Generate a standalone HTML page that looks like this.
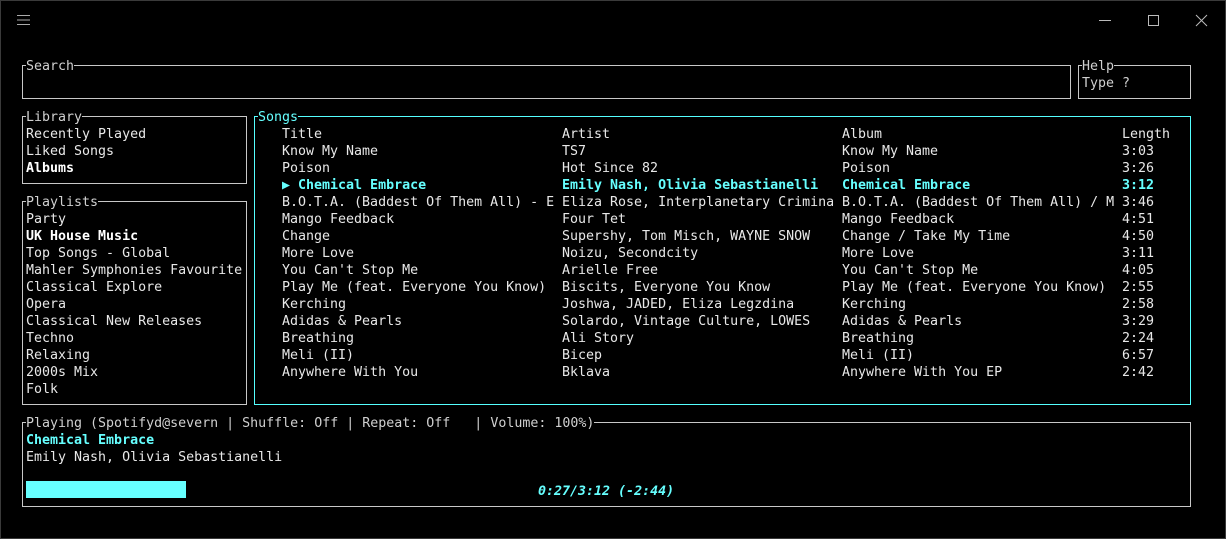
<!DOCTYPE html>
<html><head><meta charset="utf-8"><style>
html,body{margin:0;padding:0;background:#000;}
body{width:1226px;height:539px;position:relative;overflow:hidden;font-family:"DejaVu Sans Mono","Liberation Mono",monospace;font-size:13.3px;color:#e8e8e8;}
.win{position:absolute;left:0;top:0;width:1224px;height:537px;border:1px solid #3a3a3a;}
.box{position:absolute;border:1px solid #c8c8c8;box-sizing:border-box;}
.cy{border-color:#5ff;}
.t{position:absolute;white-space:pre;line-height:17px;height:17px;overflow:hidden;margin-top:2px;}
.tt{background:#000;color:#d0d0d0;}
.c{color:#66ffff;font-weight:bold;}
.b{font-weight:bold;color:#fff;}
</style></head><body>
<div class="win"></div>
<svg style="position:absolute;left:17px;top:14px" width="14" height="12"><path d="M0 1.5H13M0 6H13M0 10.5H13" stroke="#aaa" stroke-width="1"/></svg>
<svg style="position:absolute;left:1099px;top:14px" width="110" height="14"><path d="M0 6.5H12" stroke="#bbb"/><rect x="49.5" y="1.5" width="10" height="10" fill="none" stroke="#bbb"/><path d="M97 1L108 12M108 1L97 12" stroke="#bbb"/></svg>

<div class="box" style="left:22px;top:65px;width:1049px;height:34px"></div>
<div class="t tt" style="left:26px;top:56px">Search</div>
<div class="box" style="left:1078px;top:65px;width:113px;height:34px"></div>
<div class="t tt" style="left:1082px;top:56px">Help</div>
<div class="t" style="left:1082px;top:73px;color:#d0d0d0">Type ?</div>

<div class="box" style="left:22px;top:116px;width:225px;height:68px"></div>
<div class="t tt" style="left:26px;top:107px">Library</div>
<div class="t" style="left:26px;top:124px">Recently Played</div>
<div class="t" style="left:26px;top:141px">Liked Songs</div>
<div class="t b" style="left:26px;top:158px">Albums</div>

<div class="box" style="left:22px;top:201px;width:225px;height:204px"></div>
<div class="t tt" style="left:26px;top:192px">Playlists</div>
<div class="t" style="left:26px;top:209px">Party</div>
<div class="t b" style="left:26px;top:226px">UK House Music</div>
<div class="t" style="left:26px;top:243px">Top Songs - Global</div>
<div class="t" style="left:26px;top:260px">Mahler Symphonies Favourite</div>
<div class="t" style="left:26px;top:277px">Classical Explore</div>
<div class="t" style="left:26px;top:294px">Opera</div>
<div class="t" style="left:26px;top:311px">Classical New Releases</div>
<div class="t" style="left:26px;top:328px">Techno</div>
<div class="t" style="left:26px;top:345px">Relaxing</div>
<div class="t" style="left:26px;top:362px">2000s Mix</div>
<div class="t" style="left:26px;top:379px">Folk</div>

<div class="box cy" style="left:254px;top:116px;width:937px;height:289px"></div>
<div class="t" style="left:258px;top:107px;background:#000;color:#66ffff">Songs</div>

<div class="t" style="left:282px;top:124px;width:272px">Title</div><div class="t" style="left:562px;top:124px;width:272px">Artist</div><div class="t" style="left:842px;top:124px;width:272px">Album</div><div class="t" style="left:1122px;top:124px">Length</div>
<div class="t" style="left:282px;top:141px;width:272px">Know My Name</div><div class="t" style="left:562px;top:141px;width:272px">TS7</div><div class="t" style="left:842px;top:141px;width:272px">Know My Name</div><div class="t" style="left:1122px;top:141px">3:03</div>
<div class="t" style="left:282px;top:158px;width:272px">Poison</div><div class="t" style="left:562px;top:158px;width:272px">Hot Since 82</div><div class="t" style="left:842px;top:158px;width:272px">Poison</div><div class="t" style="left:1122px;top:158px">3:26</div>
<div class="t c" style="left:282px;top:175px;width:272px">▶ Chemical Embrace</div><div class="t c" style="left:562px;top:175px;width:272px">Emily Nash, Olivia Sebastianelli</div><div class="t c" style="left:842px;top:175px;width:272px">Chemical Embrace</div><div class="t c" style="left:1122px;top:175px">3:12</div>
<div class="t" style="left:282px;top:192px;width:272px">B.O.T.A. (Baddest Of Them All) - E</div><div class="t" style="left:562px;top:192px;width:272px">Eliza Rose, Interplanetary Crimina</div><div class="t" style="left:842px;top:192px;width:272px">B.O.T.A. (Baddest Of Them All) / M</div><div class="t" style="left:1122px;top:192px">3:46</div>
<div class="t" style="left:282px;top:209px;width:272px">Mango Feedback</div><div class="t" style="left:562px;top:209px;width:272px">Four Tet</div><div class="t" style="left:842px;top:209px;width:272px">Mango Feedback</div><div class="t" style="left:1122px;top:209px">4:51</div>
<div class="t" style="left:282px;top:226px;width:272px">Change</div><div class="t" style="left:562px;top:226px;width:272px">Supershy, Tom Misch, WAYNE SNOW</div><div class="t" style="left:842px;top:226px;width:272px">Change / Take My Time</div><div class="t" style="left:1122px;top:226px">4:50</div>
<div class="t" style="left:282px;top:243px;width:272px">More Love</div><div class="t" style="left:562px;top:243px;width:272px">Noizu, Secondcity</div><div class="t" style="left:842px;top:243px;width:272px">More Love</div><div class="t" style="left:1122px;top:243px">3:11</div>
<div class="t" style="left:282px;top:260px;width:272px">You Can't Stop Me</div><div class="t" style="left:562px;top:260px;width:272px">Arielle Free</div><div class="t" style="left:842px;top:260px;width:272px">You Can't Stop Me</div><div class="t" style="left:1122px;top:260px">4:05</div>
<div class="t" style="left:282px;top:277px;width:272px">Play Me (feat. Everyone You Know)</div><div class="t" style="left:562px;top:277px;width:272px">Biscits, Everyone You Know</div><div class="t" style="left:842px;top:277px;width:272px">Play Me (feat. Everyone You Know)</div><div class="t" style="left:1122px;top:277px">2:55</div>
<div class="t" style="left:282px;top:294px;width:272px">Kerching</div><div class="t" style="left:562px;top:294px;width:272px">Joshwa, JADED, Eliza Legzdina</div><div class="t" style="left:842px;top:294px;width:272px">Kerching</div><div class="t" style="left:1122px;top:294px">2:58</div>
<div class="t" style="left:282px;top:311px;width:272px">Adidas &amp; Pearls</div><div class="t" style="left:562px;top:311px;width:272px">Solardo, Vintage Culture, LOWES</div><div class="t" style="left:842px;top:311px;width:272px">Adidas &amp; Pearls</div><div class="t" style="left:1122px;top:311px">3:29</div>
<div class="t" style="left:282px;top:328px;width:272px">Breathing</div><div class="t" style="left:562px;top:328px;width:272px">Ali Story</div><div class="t" style="left:842px;top:328px;width:272px">Breathing</div><div class="t" style="left:1122px;top:328px">2:24</div>
<div class="t" style="left:282px;top:345px;width:272px">Meli (II)</div><div class="t" style="left:562px;top:345px;width:272px">Bicep</div><div class="t" style="left:842px;top:345px;width:272px">Meli (II)</div><div class="t" style="left:1122px;top:345px">6:57</div>
<div class="t" style="left:282px;top:362px;width:272px">Anywhere With You</div><div class="t" style="left:562px;top:362px;width:272px">Bklava</div><div class="t" style="left:842px;top:362px;width:272px">Anywhere With You EP</div><div class="t" style="left:1122px;top:362px">2:42</div>

<div class="box" style="left:22px;top:422px;width:1169px;height:85px"></div>
<div class="t tt" style="left:26px;top:413px">Playing (Spotifyd@severn | Shuffle: Off | Repeat: Off   | Volume: 100%)</div>
<div class="t c" style="left:26px;top:430px">Chemical Embrace</div>
<div class="t" style="left:26px;top:447px">Emily Nash, Olivia Sebastianelli</div>
<div style="position:absolute;left:26px;top:481px;width:160px;height:17px;background:#66ffff"></div>
<div class="t c" style="left:538px;top:481px;font-style:italic">0:27/3:12 (-2:44)</div>
</body></html>
